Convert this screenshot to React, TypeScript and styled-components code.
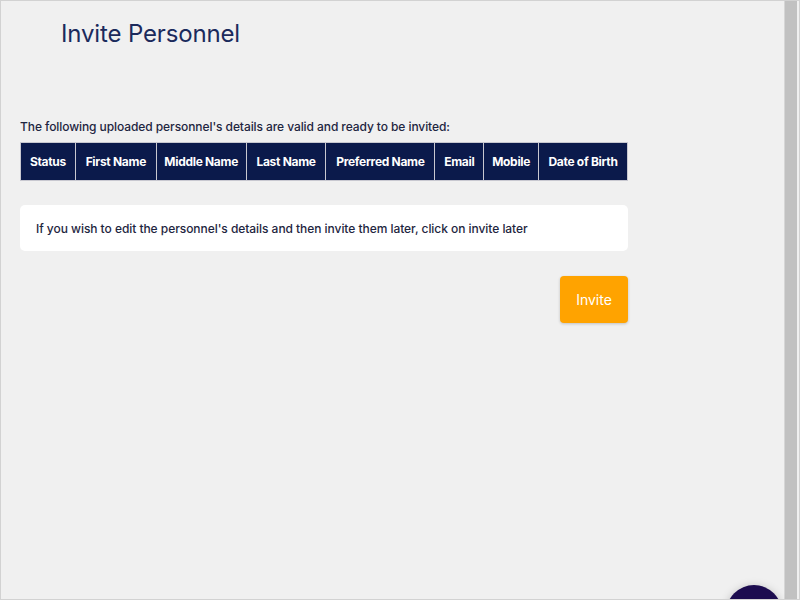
import React from "react";
import styled, { createGlobalStyle } from "styled-components";

const GlobalStyle = createGlobalStyle`
  html, body {
    margin: 0;
    padding: 0;
    background: #ffffff;
  }
  body {
    font-family: Inter, "Noto Sans", Arial, sans-serif;
  }
`;

const Frame = styled.div`
  width: 800px;
  height: 600px;
  box-sizing: border-box;
  border: 1px solid #d2d2d2;
  background: #f0f0f0;
  display: flex;
  overflow: hidden;
  position: relative;
`;

const Page = styled.main`
  flex: 1;
  display: flex;
  flex-direction: column;
  padding: 0 0 0 19px;
`;

const Title = styled.h1`
  margin: 18px 0 0 41px;
  font-size: 24px;
  font-weight: 400;
  color: #1b2a5c;
  letter-spacing: -0.15px;
  line-height: 30px;
`;

const Intro = styled.p`
  margin: 70px 0 7px 0;
  font-size: 12px;
  font-weight: 500;
  color: #1e2540;
  letter-spacing: -0.08px;
  line-height: 16px;
`;

const Table = styled.table`
  border-collapse: collapse;
  width: 608px;
`;

const HeadCell = styled.th<{ $w: number }>`
  width: ${(p) => p.$w}px;
  height: 38px;
  box-sizing: border-box;
  padding: 0;
  background: #0b1a4b;
  color: #ffffff;
  font-size: 12px;
  font-weight: 700;
  letter-spacing: -0.3px;
  text-align: center;
  border: 1px solid #c8c8d0;
  white-space: nowrap;
`;

const Note = styled.div`
  margin-top: 24px;
  width: 608px;
  height: 46px;
  box-sizing: border-box;
  background: #ffffff;
  border-radius: 5px;
  display: flex;
  align-items: center;
  padding: 0 16px;
  font-size: 12px;
  font-weight: 500;
  letter-spacing: -0.05px;
  color: #1e2540;
`;

const Actions = styled.div`
  width: 608px;
  display: flex;
  justify-content: flex-end;
  margin-top: 25px;
`;

const InviteButton = styled.button`
  width: 68px;
  height: 47px;
  border: none;
  border-radius: 4px;
  background: #ffa300;
  color: #ffffff;
  font-family: inherit;
  font-size: 14px;
  font-weight: 400;
  box-shadow: 0 1px 3px rgba(0, 0, 0, 0.2);
  cursor: pointer;
`;

const Scrollbar = styled.aside`
  width: 14px;
  display: flex;
  border-left: 1px solid #d6d6d6;
`;

const Thumb = styled.div`
  flex: 1;
  background: #c1c1c1;
  margin-right: 2px;
`;

const Fab = styled.button`
  position: absolute;
  left: 725px;
  top: 584px;
  width: 56px;
  height: 56px;
  border-radius: 50%;
  border: none;
  background: #1c0c4f;
  box-shadow: 0 2px 10px rgba(0, 0, 0, 0.25);
`;

const columns: [string, number][] = [
  ["Status", 55],
  ["First Name", 81],
  ["Middle Name", 90],
  ["Last Name", 80],
  ["Preferred Name", 109],
  ["Email", 49],
  ["Mobile", 55],
  ["Date of Birth", 89],
];

function App() {
  return (
    <>
      <GlobalStyle />
      <Frame>
        <Page>
          <Title>Invite Personnel</Title>
          <Intro>
            The following uploaded personnel's details are valid and ready to
            be invited:
          </Intro>
          <Table>
            <thead>
              <tr>
                {columns.map(([label, w]) => (
                  <HeadCell key={label} $w={w}>
                    {label}
                  </HeadCell>
                ))}
              </tr>
            </thead>
          </Table>
          <Note>
            If you wish to edit the personnel's details and then invite them
            later, click on invite later
          </Note>
          <Actions>
            <InviteButton>Invite</InviteButton>
          </Actions>
        </Page>
        <Scrollbar>
          <Thumb />
        </Scrollbar>
        <Fab aria-label="help" />
      </Frame>
    </>
  );
}

export default App;
